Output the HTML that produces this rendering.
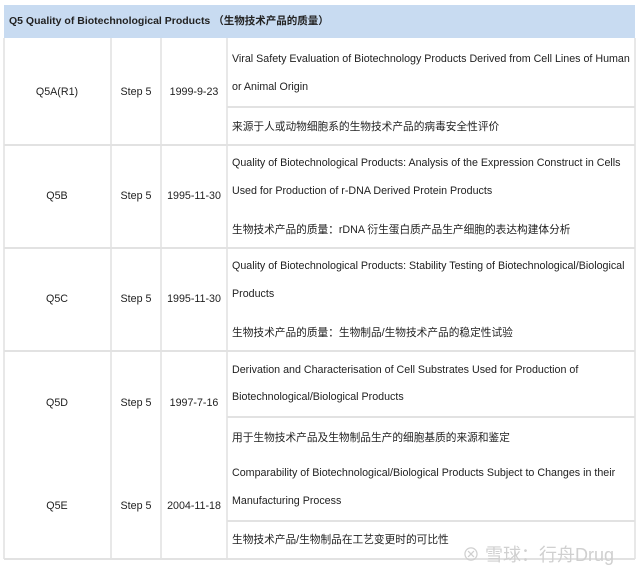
<!DOCTYPE html><html><head><meta charset="utf-8"><style>
body{margin:0;background:#fff;width:640px;height:577px;position:relative;overflow:hidden;font-family:"Liberation Sans","Noto Sans CJK SC",sans-serif;font-size:10.7px;color:#222}
div{position:absolute}
.hd{left:4px;top:5px;width:631px;height:33px;background:#c8dbf1;font-weight:bold;font-size:10.5px;line-height:33px;padding-left:5px;box-sizing:border-box}
.h{height:2px;background:#e2e2e2}
.v{width:2px;background:#e8e8e8}
.c{text-align:center;white-space:nowrap}
.t{left:232px;white-space:nowrap}
</style></head><body>
<div class="hd">Q5 Quality of Biotechnological Products （生物技术产品的质量）</div>
<div class="v" style="left:3px;top:38px;height:521px"></div>
<div class="v" style="left:110px;top:38px;height:521px"></div>
<div class="v" style="left:160px;top:38px;height:521px"></div>
<div class="v" style="left:226px;top:38px;height:521px"></div>
<div class="v" style="left:634px;top:38px;height:521px"></div>
<div class="h" style="left:4px;top:144px;width:631px"></div>
<div class="h" style="left:4px;top:247px;width:631px"></div>
<div class="h" style="left:4px;top:350px;width:631px"></div>
<div class="h" style="left:4px;top:558px;width:631px"></div>
<div class="h" style="left:227px;top:106px;width:408px"></div>
<div class="h" style="left:227px;top:416px;width:408px"></div>
<div class="h" style="left:227px;top:520px;width:408px"></div>

<div class="c" style="left:4px;width:106px;top:86px">Q5A(R1)</div>
<div class="c" style="left:112px;width:48px;top:86px">Step 5</div>
<div class="c" style="left:162px;width:64px;top:86px">1999-9-23</div>
<div class="t" style="top:53px">Viral Safety Evaluation of Biotechnology Products Derived from Cell Lines of Human</div>
<div class="t" style="top:81px">or Animal Origin</div>
<div class="t" style="top:119px">来源于人或动物细胞系的生物技术产品的病毒安全性评价</div>

<div class="c" style="left:4px;width:106px;top:190px">Q5B</div>
<div class="c" style="left:112px;width:48px;top:190px">Step 5</div>
<div class="c" style="left:162px;width:64px;top:190px">1995-11-30</div>
<div class="t" style="top:157px">Quality of Biotechnological Products: Analysis of the Expression Construct in Cells</div>
<div class="t" style="top:185px">Used for Production of r-DNA Derived Protein Products</div>
<div class="t" style="top:222px">生物技术产品的质量：rDNA 衍生蛋白质产品生产细胞的表达构建体分析</div>

<div class="c" style="left:4px;width:106px;top:293px">Q5C</div>
<div class="c" style="left:112px;width:48px;top:293px">Step 5</div>
<div class="c" style="left:162px;width:64px;top:293px">1995-11-30</div>
<div class="t" style="top:260px">Quality of Biotechnological Products: Stability Testing of Biotechnological/Biological</div>
<div class="t" style="top:288px">Products</div>
<div class="t" style="top:325px">生物技术产品的质量：生物制品/生物技术产品的稳定性试验</div>

<div class="c" style="left:4px;width:106px;top:397px">Q5D</div>
<div class="c" style="left:112px;width:48px;top:397px">Step 5</div>
<div class="c" style="left:162px;width:64px;top:397px">1997-7-16</div>
<div class="t" style="top:364px">Derivation and Characterisation of Cell Substrates Used for Production of</div>
<div class="t" style="top:391px">Biotechnological/Biological Products</div>
<div class="t" style="top:430px">用于生物技术产品及生物制品生产的细胞基质的来源和鉴定</div>

<div class="c" style="left:4px;width:106px;top:500px">Q5E</div>
<div class="c" style="left:112px;width:48px;top:500px">Step 5</div>
<div class="c" style="left:162px;width:64px;top:500px">2004-11-18</div>
<div class="t" style="top:467px">Comparability of Biotechnological/Biological Products Subject to Changes in their</div>
<div class="t" style="top:495px">Manufacturing Process</div>
<div class="t" style="top:532px">生物技术产品/生物制品在工艺变更时的可比性</div>

<div style="left:462px;top:541px;font-size:18px;color:#d0d0d0;white-space:nowrap">⊗ 雪球：行舟Drug</div>
</body></html>
